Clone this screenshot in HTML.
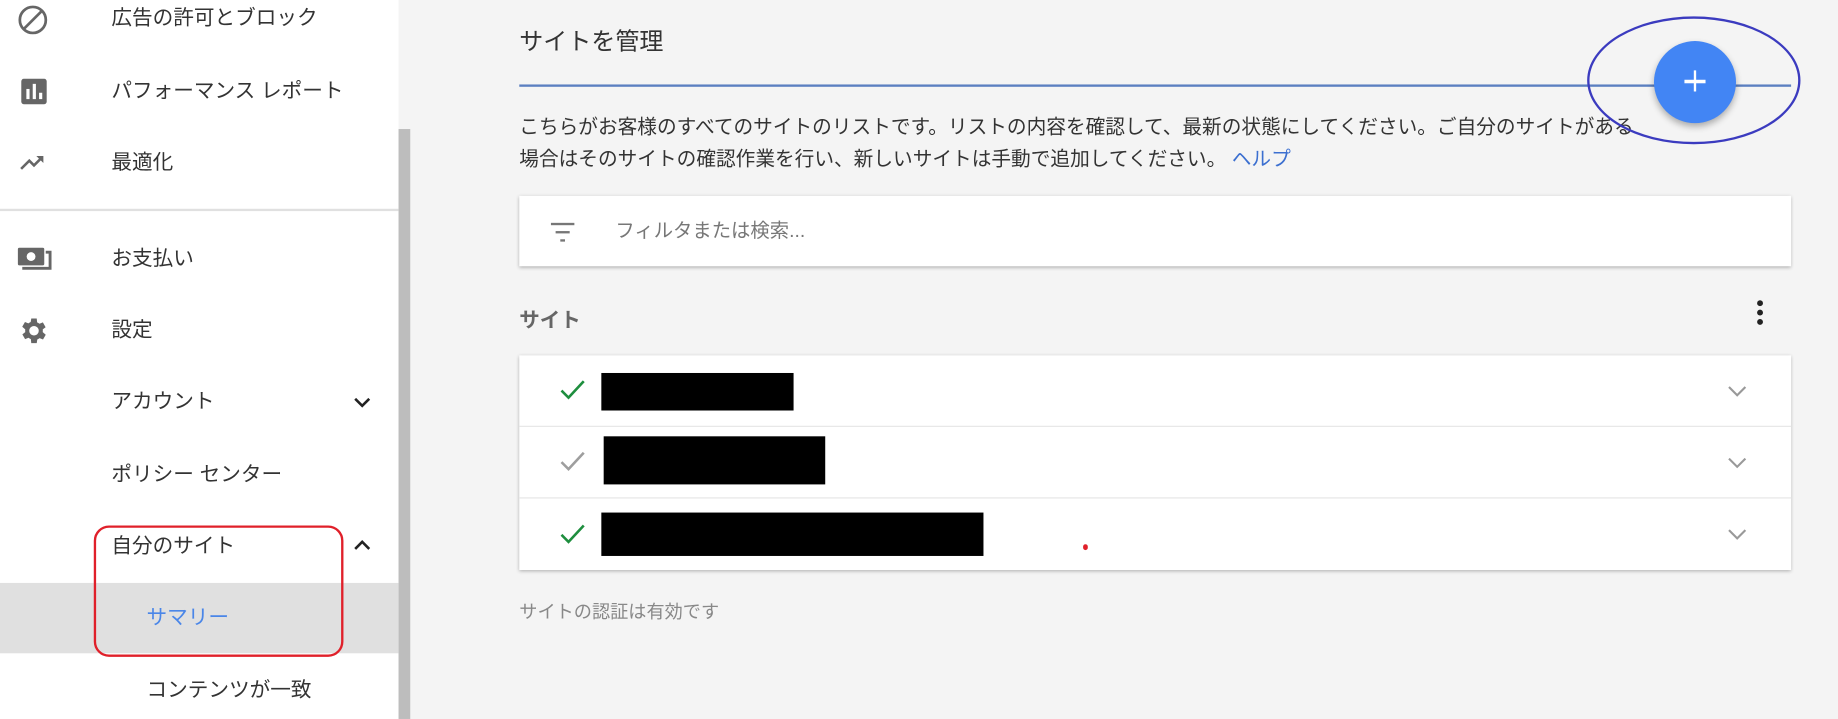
<!DOCTYPE html>
<html><head><meta charset="utf-8"><style>
html,body{margin:0;padding:0;width:1838px;height:719px;overflow:hidden;background:#f4f4f4}
#w{position:absolute;left:0;top:0;width:1568px;height:613px;transform:scale(1.17219,1.1729);transform-origin:0 0;font-family:"Liberation Sans","Noto Sans CJK JP",sans-serif;color:#333}
.a{position:absolute}
.side{left:0;top:0;width:340px;height:613px;background:#fff}
.sb{left:340px;top:110px;width:10px;height:503px;background:#bdbdbd}
.t{position:absolute;font-size:17.6px;color:#333;white-space:nowrap;line-height:20px}
.card{position:absolute;left:443px;width:1085px;background:#fff;box-shadow:0 1px 3px rgba(0,0,0,.3)}
.blk{position:absolute;background:#000}
</style></head><body><div id="w">
<div class="a side"></div>
<div class="a sb"></div>
<div class="a" style="left:0;top:178px;width:340px;height:2px;background:#e0e0e0"></div>
<div class="a" style="left:0;top:497px;width:340px;height:60px;background:#e0e0e0"></div>

<svg class="a" style="left:14px;top:3px" width="28" height="28" viewBox="0 0 24 24"><circle cx="12" cy="12" r="9.5" fill="none" stroke="#666" stroke-width="2"/><line x1="5.5" y1="18.5" x2="18.5" y2="5.5" stroke="#666" stroke-width="2"/></svg>
<svg class="a" style="left:16px;top:65px" width="26" height="26" viewBox="0 0 24 24"><rect x="2" y="2" width="20" height="20" rx="2" fill="#666"/><rect x="6" y="10" width="2.5" height="8" fill="#fff"/><rect x="11" y="6" width="2.5" height="12" fill="#fff"/><rect x="16" y="13" width="2.5" height="5" fill="#fff"/></svg>
<svg class="a" style="left:14px;top:126px" width="28" height="24" viewBox="0 0 24 24"><path d="M2 18l7-7 4 4 7-7" fill="none" stroke="#666" stroke-width="2.2"/><path d="M15 7h6v6" fill="#666"/></svg>
<svg class="a" style="left:14px;top:207px" width="30" height="26" viewBox="0 0 24 20"><rect x="1" y="3" width="18" height="12" rx="1" fill="#666"/><circle cx="10" cy="9" r="3" fill="#fff"/><path d="M20 6h3v11H5v-1" fill="none" stroke="#666" stroke-width="2"/></svg>
<svg class="a" style="left:15px;top:268px" width="28" height="28" viewBox="0 0 24 24"><path fill="#666" d="M19.4 13a7.5 7.5 0 000-2l2.1-1.6-2-3.5-2.5 1a7.3 7.3 0 00-1.7-1L15 3h-4l-.4 2.6a7.3 7.3 0 00-1.7 1l-2.5-1-2 3.5L6.6 11a7.5 7.5 0 000 2l-2.1 1.6 2 3.5 2.5-1c.5.4 1.1.7 1.7 1L11 21h4l.4-2.6c.6-.3 1.2-.6 1.7-1l2.5 1 2-3.5zM13 15.5a3.5 3.5 0 110-7 3.5 3.5 0 010 7z" transform="translate(-1 0)"/></svg>

<div class="t" style="left:95px;top:5px">広告の許可とブロック</div>
<div class="t" style="left:95px;top:67px">パフォーマンス レポート</div>
<div class="t" style="left:95px;top:128px">最適化</div>
<div class="t" style="left:95px;top:210px">お支払い</div>
<div class="t" style="left:95px;top:271px">設定</div>
<div class="t" style="left:95px;top:332px">アカウント</div>
<div class="t" style="left:95px;top:394px">ポリシー センター</div>
<div class="t" style="left:95px;top:455px">自分のサイト</div>
<div class="t" style="left:125px;top:516px;color:#4a86e8">サマリー</div>
<div class="t" style="left:125px;top:578px">コンテンツが一致</div>
<svg class="a" style="left:300px;top:334px" width="18" height="18" viewBox="0 0 18 18"><path d="M3 6l6 6 6-6" fill="none" stroke="#222" stroke-width="2.2"/></svg>
<svg class="a" style="left:300px;top:456px" width="18" height="18" viewBox="0 0 18 18"><path d="M3 12l6-6 6 6" fill="none" stroke="#222" stroke-width="2.2"/></svg>
<div class="a" style="left:80px;top:448px;width:209px;height:108px;border:2.5px solid #e0202a;border-radius:13px"></div>

<div class="t" style="left:443px;top:25px;font-size:20.5px;line-height:22px">サイトを管理</div>
<div class="a" style="left:443px;top:72px;width:1085px;height:2px;background:#5b7fc0"></div>
<div class="t" style="left:443px;top:95px;font-size:16.8px;line-height:27px">こちらがお客様のすべてのサイトのリストです。リストの内容を確認して、最新の状態にしてください。ご自分のサイトがある<br>場合はそのサイトの確認作業を行い、新しいサイトは手動で追加してください。 <span style="color:#3b6fd0">ヘルプ</span></div>
<div class="a" style="left:1411px;top:35px;width:70px;height:70px;border-radius:50%;background:#4285f4;box-shadow:0 3px 6px rgba(0,0,0,.3)"></div>
<div class="a" style="left:1437px;top:68px;width:18px;height:2.5px;background:#fff"></div>
<div class="a" style="left:1444.7px;top:60px;width:2.5px;height:18px;background:#fff"></div>
<div class="a" style="left:1354px;top:14px;width:182px;height:109px;border:2.5px solid #3b3bbf;border-radius:50%;box-sizing:border-box"></div>

<div class="card" style="top:167px;height:60px"></div>
<svg class="a" style="left:468px;top:187px" width="24" height="22" viewBox="0 0 24 22"><rect x="2" y="3" width="20" height="2" fill="#777"/><rect x="6" y="10" width="12" height="2" fill="#777"/><rect x="10" y="17" width="4" height="2" fill="#777"/></svg>
<div class="t" style="left:525px;top:187px;font-size:16.5px;color:#777">フィルタまたは検索...</div>

<div class="t" style="left:443px;top:263px;font-size:17.5px;font-weight:bold;color:#666">サイト</div>
<div class="a" style="left:1499px;top:256px;width:5px;height:5px;border-radius:50%;background:#222"></div>
<div class="a" style="left:1499px;top:264px;width:5px;height:5px;border-radius:50%;background:#222"></div>
<div class="a" style="left:1499px;top:272px;width:5px;height:5px;border-radius:50%;background:#222"></div>

<div class="card" style="top:303px;height:183px"></div>
<div class="a" style="left:443px;top:363px;width:1085px;height:1px;background:#e6e6e6"></div>
<div class="a" style="left:443px;top:424px;width:1085px;height:1px;background:#e6e6e6"></div>
<svg class="a" style="left:476px;top:322px" width="26" height="22" viewBox="0 0 26 22"><path d="M3 11l6 6L22 3" fill="none" stroke="#1e8e3e" stroke-width="2.2"/></svg>
<svg class="a" style="left:476px;top:383px" width="26" height="22" viewBox="0 0 26 22"><path d="M3 11l6 6L22 3" fill="none" stroke="#9e9e9e" stroke-width="2.2"/></svg>
<svg class="a" style="left:476px;top:445px" width="26" height="22" viewBox="0 0 26 22"><path d="M3 11l6 6L22 3" fill="none" stroke="#1e8e3e" stroke-width="2.2"/></svg>
<div class="blk" style="left:513px;top:318px;width:164px;height:32px"></div>
<div class="blk" style="left:515px;top:372px;width:189px;height:41px"></div>
<div class="blk" style="left:513px;top:437px;width:326px;height:37px"></div>
<div class="a" style="left:924px;top:464px;width:4px;height:5px;border-radius:2px;background:#e0202a"></div>
<svg class="a" style="left:1473px;top:326px" width="18" height="14" viewBox="0 0 18 14"><path d="M2 4l7 7 7-7" fill="none" stroke="#999" stroke-width="1.8"/></svg>
<svg class="a" style="left:1473px;top:387px" width="18" height="14" viewBox="0 0 18 14"><path d="M2 4l7 7 7-7" fill="none" stroke="#999" stroke-width="1.8"/></svg>
<svg class="a" style="left:1473px;top:448px" width="18" height="14" viewBox="0 0 18 14"><path d="M2 4l7 7 7-7" fill="none" stroke="#999" stroke-width="1.8"/></svg>

<div class="t" style="left:443px;top:513px;font-size:15.5px;color:#888">サイトの認証は有効です</div>
</div></body></html>
